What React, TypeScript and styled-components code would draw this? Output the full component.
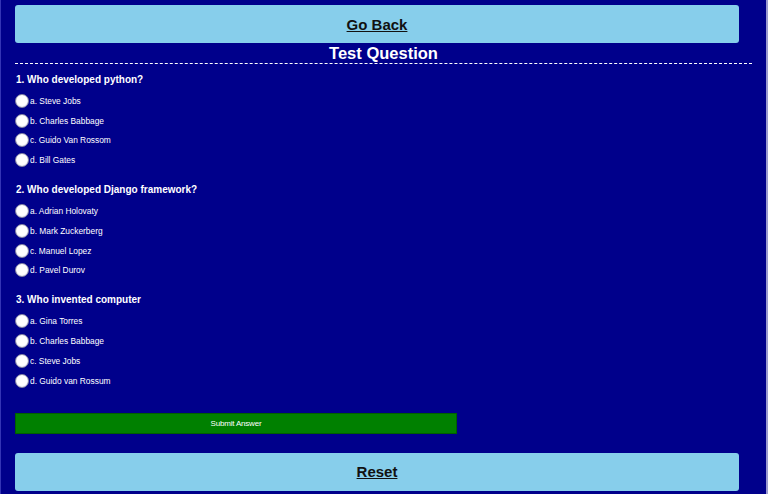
import React from "react";
import styled, { createGlobalStyle } from "styled-components";

const Global = createGlobalStyle`
  html, body { margin: 0; padding: 0; background: #00008b; }
  body { font-family: "Liberation Sans", Arial, sans-serif; }
  * { box-sizing: border-box; }
`;

const Page = styled.div`
  min-height: 494px;
  background: #00008b;
  border-left: 1px solid #3434b4;
  border-right: 2px solid #9b9bd0;
  padding: 5px 14px 4px 14px;
  display: flex;
  flex-direction: column;
`;

const BigButton = styled.button`
  width: calc(100% - 13px);
  height: 38px;
  background: #87ceeb;
  border: none;
  border-radius: 3px;
  color: #111;
  font-family: "Liberation Sans", Arial, sans-serif;
  font-weight: bold;
  font-size: 15px;
  text-decoration: underline;
  cursor: pointer;
  padding: 0;
  margin: 0;
`;

const Title = styled.h2`
  margin: 0;
  height: 21px;
  line-height: 20px;
  text-align: center;
  color: #fff;
  font-size: 16.5px;
  font-weight: bold;
  border-bottom: 1px dashed #fff;
`;

const Questions = styled.div`
  margin-top: 10px;
  display: flex;
  flex-direction: column;
  gap: 14px;
`;

const Block = styled.div`
  display: flex;
  flex-direction: column;
`;

const QText = styled.div`
  color: #fff;
  font-weight: bold;
  font-size: 10px;
  line-height: 12px;
  padding-left: 1px;
  margin-bottom: 5px;
`;

const Option = styled.label`
  display: flex;
  align-items: center;
  height: 19.8px;
  color: #fff;
  font-size: 8.4px;
  cursor: pointer;
`;

const Radio = styled.input`
  appearance: none;
  width: 14px;
  height: 14px;
  margin: 0 1px 0 0;
  border-radius: 50%;
  background: radial-gradient(circle at 50% 45%, #ffffff 55%, #e4e4ee 80%, #9a9ab8 100%);
  border: 1px solid #8a8aa8;
  flex-shrink: 0;
`;

const Submit = styled.button`
  margin-top: 22px;
  width: 442px;
  height: 21px;
  background: #008000;
  border: 1px solid #006000;
  color: #fff;
  font-family: "Liberation Sans", Arial, sans-serif;
  font-size: 8px;
  letter-spacing: -0.2px;
  padding: 0;
  cursor: pointer;
`;

const ResetWrap = styled.div`
  margin-top: 19px;
`;

const data = [
  {
    q: "1. Who developed python?",
    opts: ["a. Steve Jobs", "b. Charles Babbage", "c. Guido Van Rossom", "d. Bill Gates"],
  },
  {
    q: "2. Who developed Django framework?",
    opts: ["a. Adrian Holovaty", "b. Mark Zuckerberg", "c. Manuel Lopez", "d. Pavel Durov"],
  },
  {
    q: "3. Who invented computer",
    opts: ["a. Gina Torres", "b. Charles Babbage", "c. Steve Jobs", "d. Guido van Rossum"],
  },
];

export default function App() {
  return (
    <>
      <Global />
      <Page>
        <BigButton>Go Back</BigButton>
        <Title>Test Question</Title>
        <Questions>
          {data.map((d, i) => (
            <Block key={i}>
              <QText>{d.q}</QText>
              {d.opts.map((o, j) => (
                <Option key={j}>
                  <Radio type="radio" name={`q${i}`} />
                  {o}
                </Option>
              ))}
            </Block>
          ))}
        </Questions>
        <Submit>Submit Answer</Submit>
        <ResetWrap>
          <BigButton>Reset</BigButton>
        </ResetWrap>
      </Page>
    </>
  );
}
